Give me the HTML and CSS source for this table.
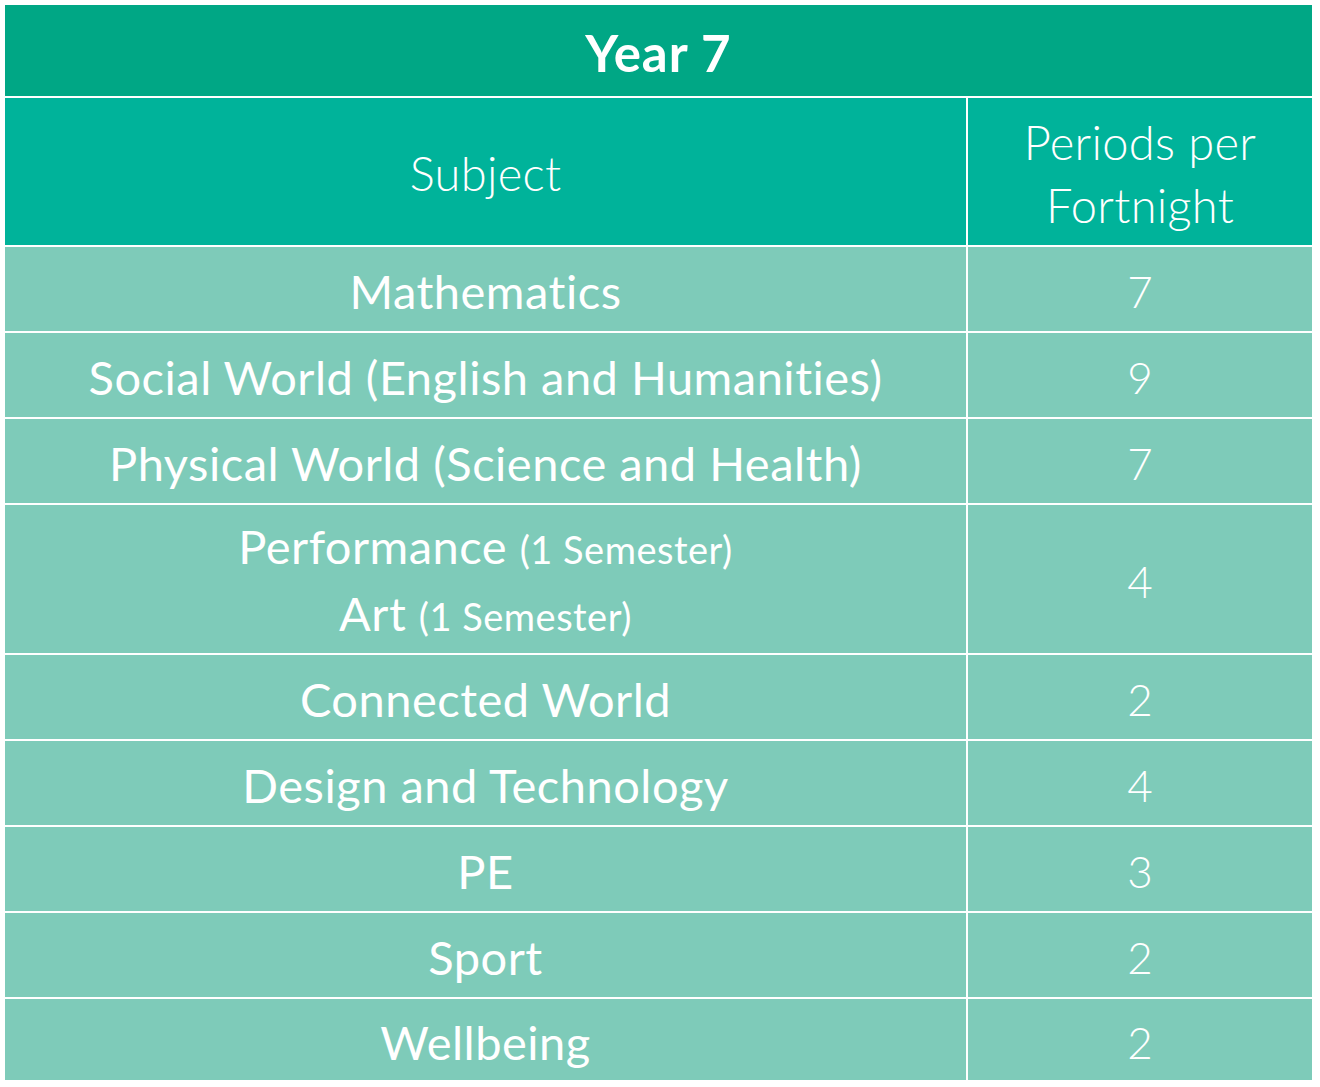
FILE: index.html
```html
<!DOCTYPE html>
<html lang="en">
<head>
<meta charset="utf-8">
<title>Year 7</title>
<link rel="stylesheet" href="styles.css">
</head>
<body>
<table class="plan">
  <colgroup><col class="c-subj"><col class="c-num"></colgroup>
  <tr class="r-title"><th colspan="2" class="title">Year 7</th></tr>
  <tr class="r-head"><th class="head">Subject</th><th class="head">Periods per<br>Fortnight</th></tr>
  <tr class="r-std"><td class="subj">Mathematics</td><td class="num">7</td></tr>
  <tr class="r-std"><td class="subj">Social World (English and Humanities)</td><td class="num">9</td></tr>
  <tr class="r-std"><td class="subj">Physical World (Science and Health)</td><td class="num">7</td></tr>
  <tr class="r-tall"><td class="subj">Performance <span class="note">(1 Semester)</span><br>Art <span class="note">(1 Semester)</span></td><td class="num">4</td></tr>
  <tr class="r-std"><td class="subj">Connected World</td><td class="num">2</td></tr>
  <tr class="r-std"><td class="subj">Design and Technology</td><td class="num">4</td></tr>
  <tr class="r-std"><td class="subj">PE</td><td class="num">3</td></tr>
  <tr class="r-std"><td class="subj">Sport</td><td class="num">2</td></tr>
  <tr class="r-last"><td class="subj">Wellbeing</td><td class="num">2</td></tr>
</table>
</body>
</html>
```
FILE: styles.css
```css
html, body {
  margin: 0;
  padding: 0;
  background: #ffffff;
}
body {
  padding: 3px;
  font-family: "Lato", "Noto Sans", sans-serif;
  color: #ffffff;
}
.plan {
  border-collapse: separate;
  border-spacing: 2px;
  background: #ffffff;
  width: 1311px;
  table-layout: fixed;
}
.c-subj { width: 961px; }
.c-num { width: 344px; }
.plan th, .plan td {
  padding: 4px 0 0 0;
  text-align: center;
  vertical-align: middle;
  color: #ffffff;
  white-space: nowrap;
  box-sizing: border-box;
}
.r-title { height: 91px; }
.r-head { height: 147px; }
.r-std { height: 84px; }
.r-tall { height: 148px; }
.r-last { height: 81px; }
.title {
  background: #00a785;
  font-size: 51px;
  font-weight: 700;
  letter-spacing: 1px;
}
.head {
  background: #00b39a;
  font-size: 47px;
  font-weight: 300;
  line-height: 63px;
  letter-spacing: 0.3px;
}
.subj {
  background: #7ecbb9;
  font-size: 47px;
  font-weight: 400;
  line-height: 64px;
  letter-spacing: 0.5px;
}
.num {
  background: #7ecbb9;
  font-size: 44px;
  font-weight: 300;
}
.note {
  font-size: 38px;
  letter-spacing: 0.5px;
}
```
